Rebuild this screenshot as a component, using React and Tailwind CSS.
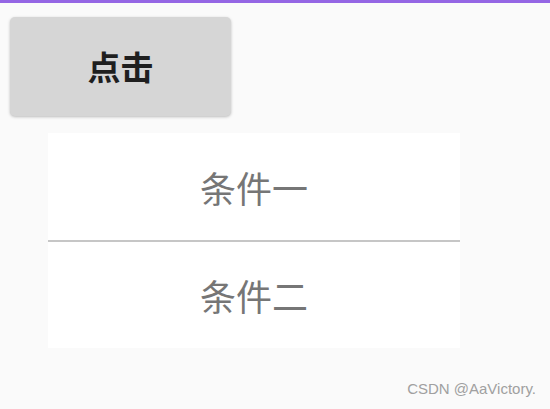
export default function App() {
  return (
    <div
      className="w-[550px] h-[409px] bg-[#fafafa] relative overflow-hidden"
      style={{ fontFamily: '"Noto Sans CJK SC", "Noto Sans", sans-serif' }}
    >
      <div className="h-[3px] bg-[#9466e4]" />
      <div className="pl-[10px] pt-[14px]">
        <button className="w-[221px] h-[99px] bg-[#d6d6d6] rounded-[5px] shadow-[0_1px_3px_rgba(0,0,0,0.25)] text-[33px] font-bold text-[#1f1f1f] flex items-center justify-center">
          点击
        </button>
      </div>
      <div className="ml-[48px] mt-[17px] w-[412px] bg-white flex flex-col">
        <div className="h-[107px] flex items-center justify-center text-[36px] text-[#767676]">
          条件一
        </div>
        <div className="h-[2px] bg-[#c6c6c6]" />
        <div className="h-[106px] flex items-center justify-center text-[36px] text-[#767676]">
          条件二
        </div>
      </div>
      <div
        className="absolute right-[14px] bottom-[9px] text-[15px] text-[#a0a0a0]"
        style={{ fontFamily: '"Liberation Sans", Arial, sans-serif' }}
      >
        CSDN @AaVictory.
      </div>
    </div>
  );
}
